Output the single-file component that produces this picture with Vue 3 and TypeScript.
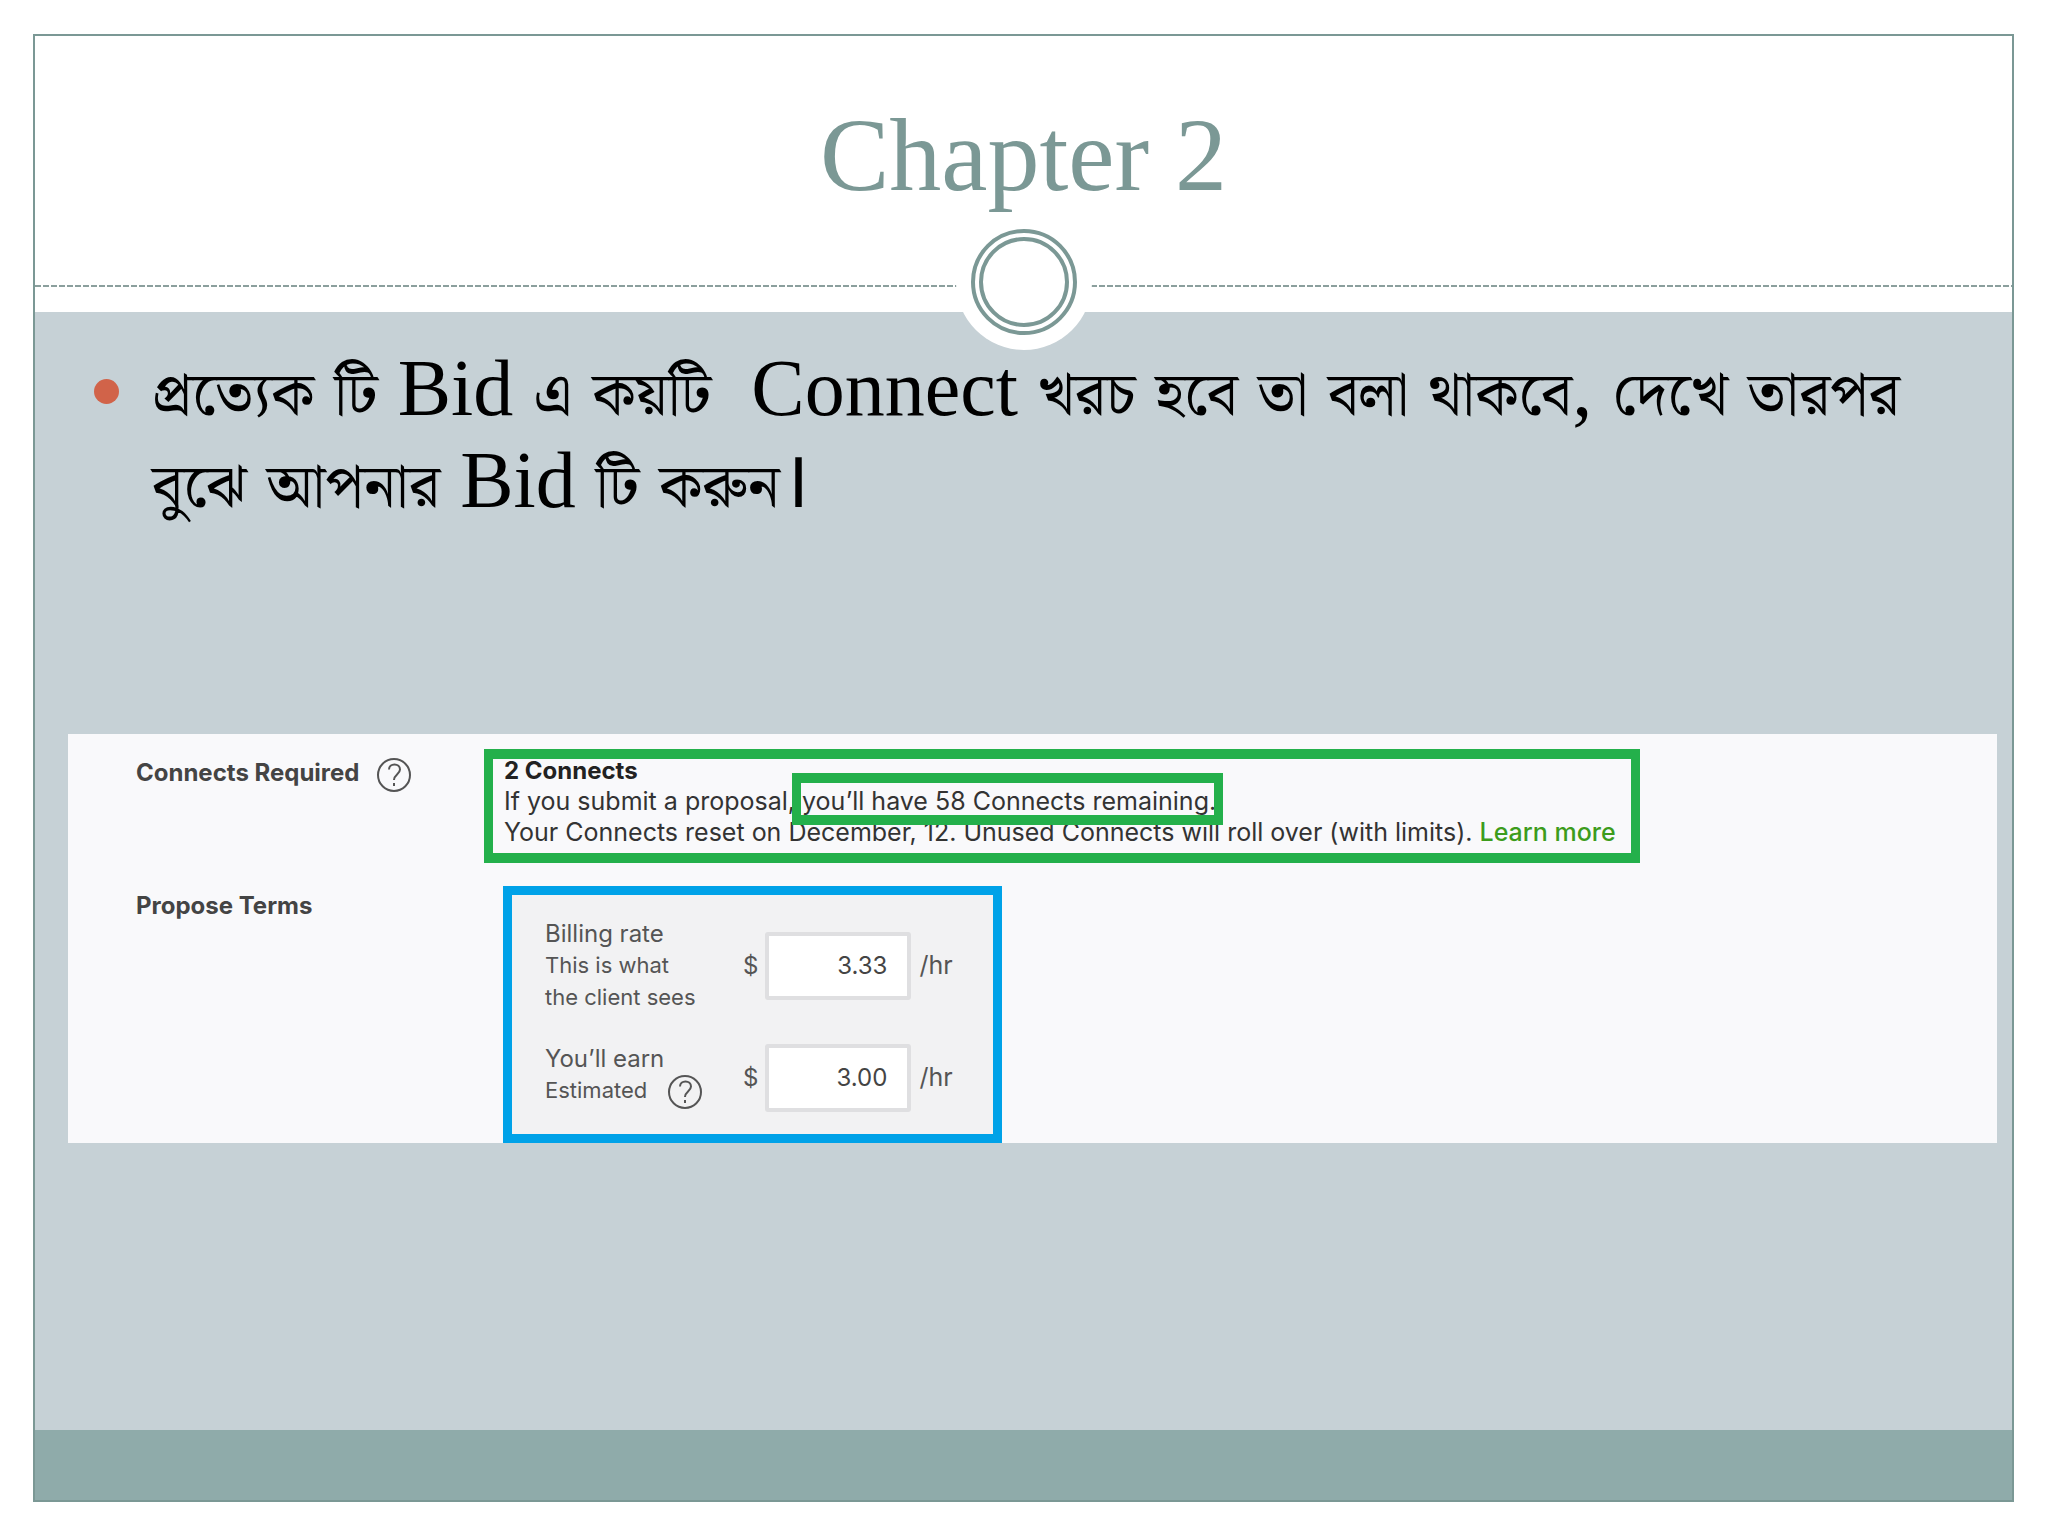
<script setup lang="ts">
import { ref } from 'vue'

const lines = [
  'প্রত্যেক টি Bid এ কয়টি  Connect খরচ হবে তা বলা থাকবে, দেখে তারপর',
  'বুঝে আপনার Bid টি করুন।',
]

// Latin words, spaces and punctuation are set larger than the Bangla letters.
const tokens = (line: string): string[] => line.split(/([ A-Za-z,]+|।)/).filter(Boolean)

const tokenClass = (token: string): string => {
  if (token === '।') return 'danda'
  return /^[ A-Za-z,]+$/.test(token) ? 'latin' : 'bangla'
}

const billingRate = ref('3.33')
const earnings = ref('3.00')
</script>

<template>
  <main class="slide">
    <header class="slide-header">
      <h1>Chapter 2</h1>
      <div class="divider"></div>
      <svg class="rings" viewBox="0 0 136 136" aria-hidden="true">
        <circle cx="68" cy="68" r="68" fill="#fff" />
        <circle cx="68" cy="68" r="51" fill="none" stroke="#7b9895" stroke-width="4" />
        <circle cx="68" cy="68" r="43" fill="none" stroke="#7b9895" stroke-width="4" />
      </svg>
    </header>

    <section class="content">
      <ul class="points">
        <li>
          <span v-for="(line, i) in lines" :key="i" class="line">
            <span v-for="(token, j) in tokens(line)" :key="j" :class="tokenClass(token)">{{ token }}</span>
          </span>
        </li>
      </ul>

      <form class="panel" @submit.prevent>
        <div class="row">
          <h2 class="row-title">
            Connects Required
            <button type="button" class="help" aria-label="About Connects">
              <svg viewBox="0 0 36 36" aria-hidden="true">
                <circle cx="18" cy="18" r="16" />
                <path d="M13 12.500c0-3 2.500-5 5.500-5s5.500 2 5.500 5c0 4.500-6 5-6 10.500M18 26v3" />
              </svg>
            </button>
          </h2>
          <div class="connects">
            <div class="connects-text">
              <strong>2 Connects</strong>
              <p>If you submit a proposal, <span class="marked">you’ll have 58 Connects remaining.</span></p>
              <p>Your Connects reset on December, 12. Unused Connects will roll over (with limits). <a href="#">Learn more</a></p>
            </div>
          </div>
        </div>

        <div class="row">
          <h2 class="row-title terms-title">Propose Terms</h2>
          <div class="terms">
            <div class="field">
              <label for="rate">Billing rate<small>This is what<br />the client sees</small></label>
              <span class="currency">$</span>
              <input id="rate" v-model="billingRate" type="text" />
              <span class="unit">/hr</span>
            </div>
            <div class="field">
              <div class="field-label">
                <label for="earn">You’ll earn<small>Estimated</small></label>
                <button type="button" class="help" aria-label="About earnings">
                  <svg viewBox="0 0 36 36" aria-hidden="true">
                    <circle cx="18" cy="18" r="16" />
                    <path d="M13 12.500c0-3 2.500-5 5.500-5s5.500 2 5.500 5c0 4.500-6 5-6 10.500M18 26v3" />
                  </svg>
                </button>
              </div>
              <span class="currency">$</span>
              <input id="earn" v-model="earnings" type="text" />
              <span class="unit">/hr</span>
            </div>
          </div>
        </div>
      </form>
    </section>

    <footer class="slide-footer"></footer>
  </main>
</template>

<style>
body {
  background: #fff;
}
</style>

<style scoped>
.slide {
  box-sizing: border-box;
  display: flex;
  flex-direction: column;
  min-height: calc(100vh - 68px);
  margin: 34px 34px 34px 33px;
  border: 2px solid #7b9895;
  background: #c6d1d6;
}

.slide-header {
  position: relative;
  box-sizing: border-box;
  height: 276px;
  padding-top: 61px;
  background: #fff;
}

h1 {
  margin: 0;
  font: 400 104px/116px "Liberation Serif", serif;
  text-align: center;
  color: #7b9895;
}

.divider {
  height: 2px;
  margin-top: 72px;
  background: repeating-linear-gradient(90deg, #8b9f9d 0 6px, #fff 6px 8px);
}

.rings {
  position: absolute;
  top: 178px;
  left: 50%;
  width: 136px;
  height: 136px;
  margin-left: -68px;
}

.content {
  flex: 1;
  padding: 30px 15px 0 33px;
}

.points {
  margin: 0;
  padding: 0 0 0 84px;
  list-style: none;
  color: #000;
}

.points li {
  position: relative;
}

.points li::before {
  content: "";
  position: absolute;
  top: 37px;
  left: -58px;
  width: 25px;
  height: 25px;
  border-radius: 50%;
  background: #d16349;
}

.line {
  display: flex;
  align-items: baseline;
  height: 92px;
  line-height: 92px;
  white-space: pre;
}

.latin {
  font-family: "Liberation Serif", serif;
  font-size: 80px;
}

.bangla {
  font-family: "Noto Serif Bengali", "Liberation Serif", serif;
  font-size: 61px;
}

.danda {
  font-family: "Noto Sans Bengali", "Noto Sans", sans-serif;
  font-size: 80px;
}

.panel {
  display: flex;
  flex-direction: column;
  gap: 23px;
  margin-top: 208px;
  padding: 15px 16px 0 68px;
  background: #f9f9fb;
  font: 24px/31px Inter, sans-serif;
  color: #333;
}

.row {
  display: flex;
  align-items: flex-start;
}

.row-title {
  display: flex;
  align-items: flex-start;
  gap: 17px;
  width: 348px;
  margin: 8px 0 0;
  font-size: 24px;
  line-height: 32px;
  color: #444;
}

.terms-title {
  margin: 4px 0 0;
}

.help {
  width: 36px;
  height: 36px;
  padding: 0;
  border: 0;
  background: none;
}

.help svg {
  display: block;
  fill: none;
  stroke: #555;
  stroke-width: 2;
}

.connects {
  box-sizing: border-box;
  width: 1156px;
  height: 114px;
  padding: 0 11px;
  border: solid #24b04b;
  border-width: 10px 9px;
  white-space: nowrap;
}

.connects-text {
  margin-top: -3px;
}

.connects strong {
  display: block;
  line-height: 30px;
  color: #222;
}

.connects p {
  margin: 0;
  font-size: 25px;
}

.connects a {
  color: #3c9c1c;
  font-weight: 500;
  text-decoration: none;
}

.marked {
  position: relative;
}

.marked::after {
  content: "";
  position: absolute;
  inset: -13px -7px -9px -10px;
  border: solid #24b04b;
  border-width: 10px 9px;
}

.terms {
  box-sizing: border-box;
  display: flex;
  flex-direction: column;
  gap: 30px;
  width: 499px;
  height: 257px;
  margin-left: 19px;
  padding: 23px 33px;
  border: 9px solid #00a2e8;
  background: #f2f2f3;
  color: #555;
}

.field {
  display: flex;
  align-items: center;
}

.field > label,
.field-label {
  width: 198px;
}

.field-label {
  display: flex;
  align-items: flex-end;
  gap: 3px;
}

.field-label label {
  padding-bottom: 6px;
}

.field-label .help {
  margin-bottom: 2px;
}

small {
  display: block;
  font-size: 22px;
  line-height: 32px;
}

input {
  box-sizing: border-box;
  width: 146px;
  height: 68px;
  margin: 0 8px 0 7px;
  padding: 0 20px;
  border: 4px solid #dfdfe1;
  border-radius: 3px;
  background: #fff;
  font: inherit;
  color: #444;
  text-align: right;
}

.unit {
  font-size: 25px;
}

.slide-footer {
  height: 70px;
  background: #8fabaa;
}
</style>
